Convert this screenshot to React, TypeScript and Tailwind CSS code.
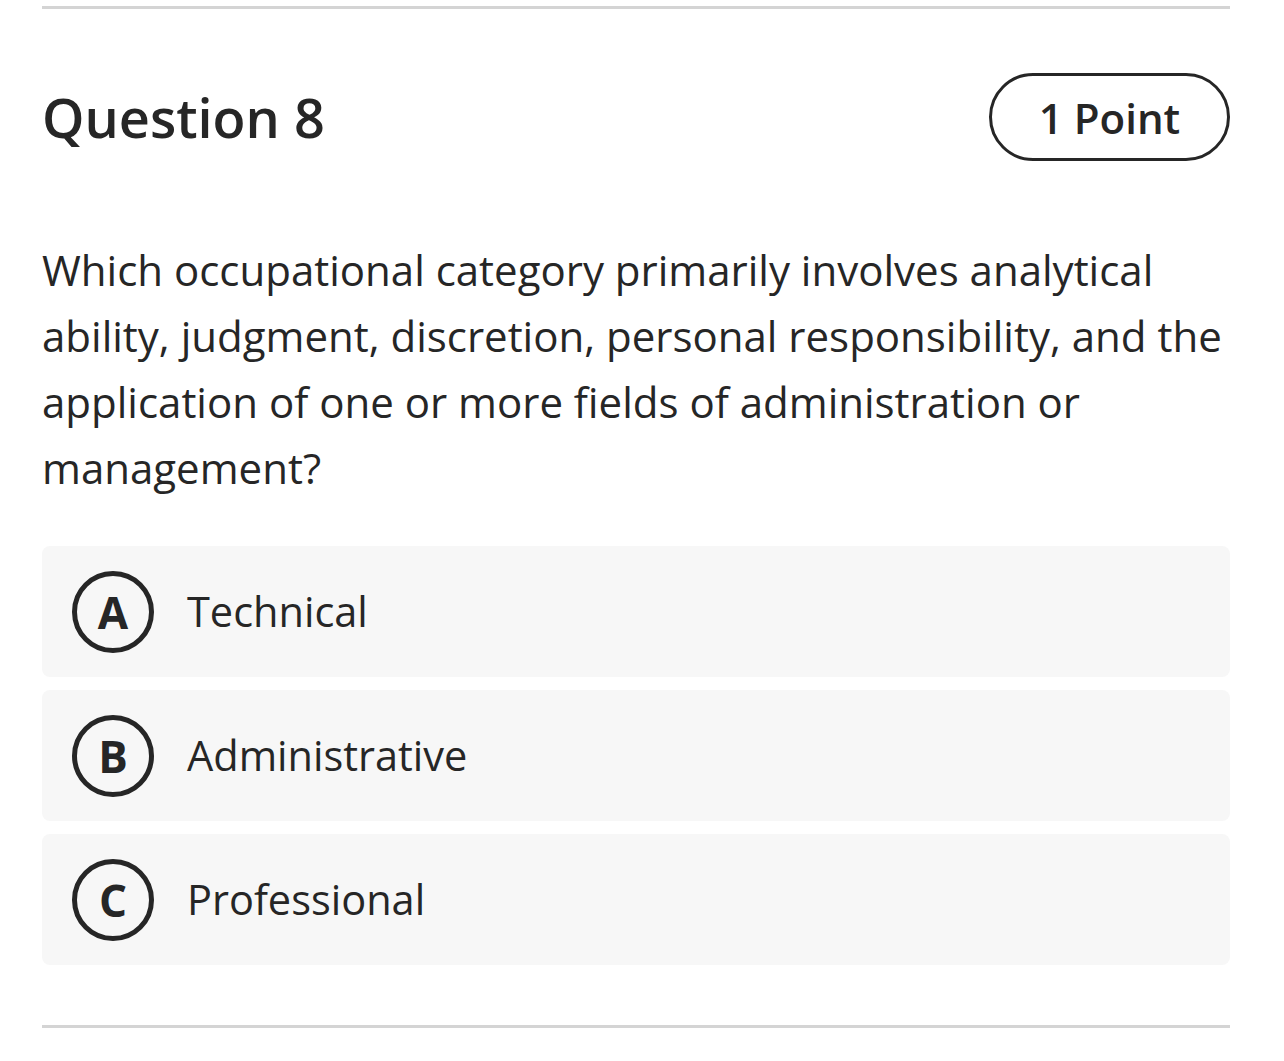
import React from 'react';

const OPTIONS = [
  { key: 'A', label: 'Technical' },
  { key: 'B', label: 'Administrative' },
  { key: 'C', label: 'Professional' },
];

export default function App() {
  return (
    <div
      className="min-h-screen bg-white pl-[42px] pr-[54px] pt-[6px] text-[#262626]"
      style={{ fontFamily: '"Open Sans", "Noto Sans", sans-serif' }}
    >
      <div className="h-[3px] bg-[#d4d4d4]" />

      <div className="mt-[64px] flex items-center justify-between">
        <h2 className="text-[54px] font-semibold leading-none">Question 8</h2>
        <div className="flex h-[88px] w-[241px] items-center justify-center rounded-full border-[3px] border-[#262626] text-[42px] font-semibold">
          1 Point
        </div>
      </div>

      <p className="mt-[76px] text-[42px] leading-[66px]">
        Which occupational category primarily involves analytical ability, judgment, discretion,
        personal responsibility, and the application of one or more fields of administration or
        management?
      </p>

      <div className="mt-[45px] flex flex-col gap-[13px]">
        {OPTIONS.map((o) => (
          <div key={o.key} className="flex h-[131px] items-center gap-[33px] rounded-lg bg-[#f7f7f7] pl-[30px]">
            <div className="flex h-[82px] w-[82px] items-center justify-center rounded-full border-[5px] border-[#262626] text-[44px] font-bold">
              {o.key}
            </div>
            <span className="text-[41.5px]">{o.label}</span>
          </div>
        ))}
      </div>

      <div className="mt-[60px] h-[3px] bg-[#d4d4d4]" />
    </div>
  );
}
